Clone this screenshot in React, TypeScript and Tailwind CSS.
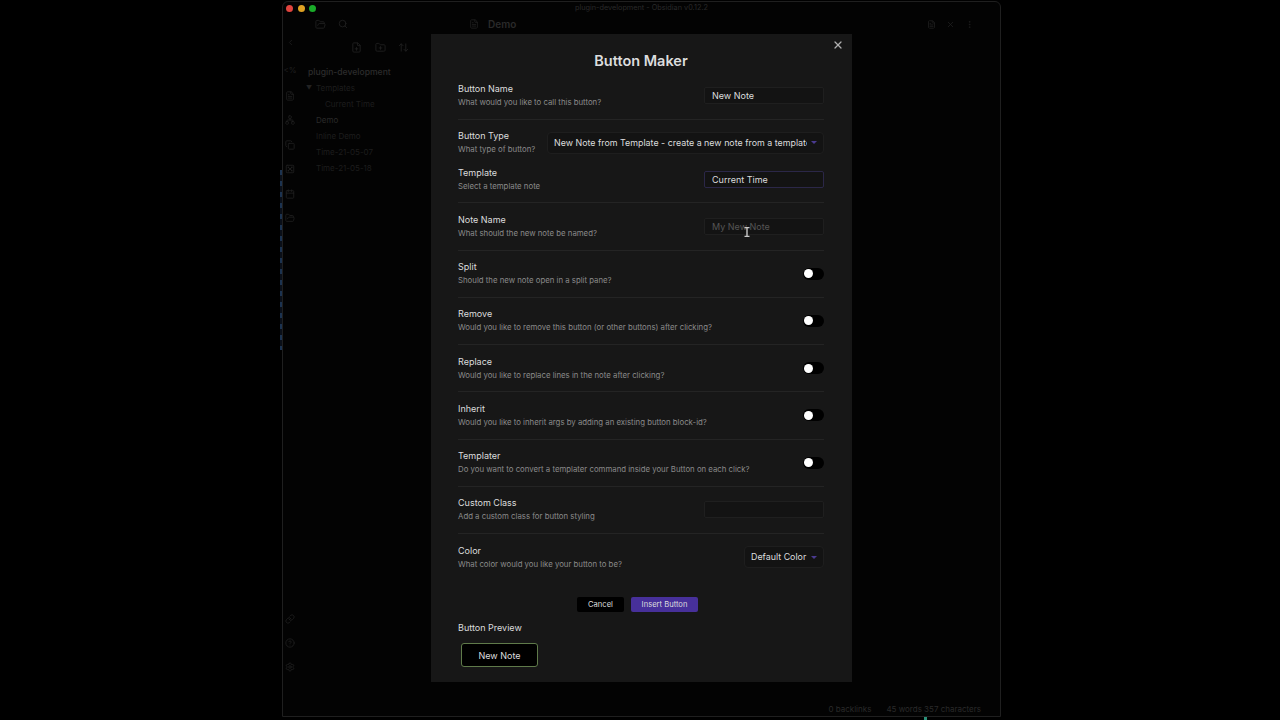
import {
  ArrowUpDown,
  Calendar,
  ChevronLeft,
  CircleHelp,
  Copy,
  FilePlus,
  FileText,
  FolderOpen,
  FolderPlus,
  Link,
  MoreVertical,
  Network,
  Search,
  Settings,
  Vault,
  X,
} from "lucide-react";

const files = [
  { name: "Templates", indent: "pl-[19px]", arrow: true },
  { name: "Current Time", indent: "pl-[28px]" },
  { name: "Demo", indent: "pl-[19px]", bright: true },
  { name: "Inline Demo", indent: "pl-[19px]" },
  { name: "Time-21-05-07", indent: "pl-[19px]" },
  { name: "Time-21-05-18", indent: "pl-[19px]" },
];

function Background() {
  const dim = "text-[#202020]";
  return (
    <div className="ml-[282px] mt-[1px] flex h-[716px] w-[719px] flex-col rounded-t-[6px] border border-[#1f1f1f] bg-[#030303]">
      <div className="relative flex h-[13px] shrink-0 items-center">
        <div className="ml-[3px] flex gap-[4.5px]">
          <span className="h-[7px] w-[7px] rounded-full bg-[#e0443e]" />
          <span className="h-[7px] w-[7px] rounded-full bg-[#dea123]" />
          <span className="h-[7px] w-[7px] rounded-full bg-[#1aab29]" />
        </div>
        <span className="absolute left-[292px] top-0 text-[7.3px] leading-[11px] text-[#2a2a2a]">
          plugin-development - Obsidian v0.12.2
        </span>
      </div>
      <div className="flex h-[18px] shrink-0 items-center">
        <FolderOpen size={11} className={`ml-[32px] ${dim}`} />
        <Search size={10} className={`ml-[12px] ${dim}`} />
        <FileText size={10} className={`ml-[121px] ${dim}`} />
        <span className="ml-[9px] text-[10px] font-semibold text-[#2a2a2a]">Demo</span>
        <div className="ml-auto mr-[26px] flex items-center gap-[10px]">
          <FileText size={9} className={dim} />
          <X size={9} className={dim} />
          <MoreVertical size={9} className={dim} />
        </div>
      </div>
      <div className="flex min-h-0 flex-1">
        <div className={`flex w-[14px] shrink-0 flex-col items-center gap-[14.5px] pt-[5px] ${dim}`}>
          <ChevronLeft size={9} />
          <span className="mt-[2.5px] text-[8px]">{"<%"}</span>
          <FileText size={10} />
          <Network size={10} />
          <Copy size={10} />
          <Vault size={10} />
          <Calendar size={10} />
          <FolderOpen size={10} />
          <div className="mt-auto flex flex-col items-center gap-[14px] pb-[32px]">
            <Link size={10} />
            <CircleHelp size={10} />
            <Settings size={10} />
          </div>
        </div>
        <div className="w-[134px] shrink-0">
          <div className={`flex gap-[12.5px] pl-[54px] pt-[9px] ${dim}`}>
            <FilePlus size={11} />
            <FolderPlus size={11} />
            <ArrowUpDown size={11} />
          </div>
          <p className="mt-[12px] pl-[11px] text-[8.6px] font-medium leading-[14px] text-[#2c2c2c]">
            plugin-development
          </p>
          <div className="mt-[1px]">
            {files.map((file) => (
              <div
                key={file.name}
                className={`relative h-[16px] ${file.indent} text-[8px] leading-[16px] ${file.bright ? "text-[#2a2a2a]" : "text-[#1d1d1d]"}`}
              >
                {file.arrow ? (
                  <span className="absolute left-[9px] top-0 text-[6px] text-[#222222]">▼</span>
                ) : null}
                {file.name}
              </div>
            ))}
          </div>
        </div>
        <div className="flex-1" />
      </div>
      <div className="flex h-[12px] shrink-0 items-start justify-end gap-[15px] pr-[19px] text-[8px] leading-[10px] text-[#2a2a2a]">
        <span>0 backlinks</span>
        <span>45 words 357 characters</span>
      </div>
    </div>
  );
}

function Toggle() {
  return (
    <div className="flex h-[12px] w-[21px] items-center rounded-full bg-black pl-[1px]">
      <span className="h-[9px] w-[9px] rounded-full bg-white" />
    </div>
  );
}

function TextBox({
  value,
  placeholder,
  focused,
}: {
  value?: string;
  placeholder?: string;
  focused?: boolean;
}) {
  return (
    <div
      className={`flex h-[17px] w-[120px] items-center rounded-[2px] border bg-[#131313] px-[7px] text-[9px] ${
        focused ? "border-[#2b2748]" : "border-[#1f1f1f]"
      } ${value ? "text-[#dcddde]" : "text-[#555555]"}`}
    >
      {value ?? placeholder}
    </div>
  );
}

function Dropdown({ label, className }: { label: string; className: string }) {
  return (
    <div
      className={`flex h-[22px] items-center justify-between rounded-[4px] border border-[#1e1e1e] bg-[#131313] px-[6px] text-[8.9px] text-[#dcddde] ${className}`}
    >
      <span className="min-w-0 flex-1 overflow-hidden whitespace-nowrap">{label}</span>
      <span className="ml-[4px] h-0 w-0 shrink-0 border-x-[3px] border-t-[3px] border-x-transparent border-t-[#4a3a8f]" />
    </div>
  );
}

function Setting({
  name,
  desc,
  border = true,
  className = "",
  children,
}: {
  name: string;
  desc: string;
  border?: boolean;
  className?: string;
  children: React.ReactNode;
}) {
  return (
    <div
      className={`flex h-[47.25px] items-center justify-between ${border ? "border-t border-[#242424]" : ""} ${className}`}
    >
      <div className="shrink-0">
        <p className="text-[9px] leading-[14px] text-[#dcddde]">{name}</p>
        <p className="text-[7.8px] leading-[13px] text-[#8a8a8a]">{desc}</p>
      </div>
      {children}
    </div>
  );
}

function Modal() {
  return (
    <div className="absolute left-[431px] top-[33.5px] w-[421px] bg-[#171717] pb-[15px] pl-[27px] pr-[28px] pt-[17.5px]">
      <X size={12} strokeWidth={2.5} className="absolute right-[8px] top-[5px] text-[#b0b0b0]" />
      <h1 className="mb-[0.5px] text-center text-[14.5px] font-semibold leading-[20px] text-[#dcddde]">
        Button Maker
      </h1>
      <Setting
        name="Button Name"
        desc="What would you like to call this button?"
        border={false}
        className="pt-[1px]"
      >
        <TextBox value="New Note" />
      </Setting>
      <Setting name="Button Type" desc="What type of button?" className="-mb-[10px]">
        <Dropdown
          label="New Note from Template - create a new note from a template"
          className="w-[277px]"
        />
      </Setting>
      <Setting name="Template" desc="Select a template note" border={false} className="-mb-[1px]">
        <TextBox value="Current Time" focused />
      </Setting>
      <Setting name="Note Name" desc="What should the new note be named?">
        <div className="relative">
          <TextBox placeholder="My New Note" />
          {/* text cursor from the recording */}
          <svg
            viewBox="0 0 6 10"
            className="absolute left-[40px] top-[9px] h-[10px] w-[6px] text-[#c8c8c8]"
          >
            <path d="M0.5 0.5h5M0.5 9.5h5M3 0.5v9" stroke="currentColor" fill="none" strokeWidth="1.4" />
          </svg>
        </div>
      </Setting>
      <Setting name="Split" desc="Should the new note open in a split pane?">
        <Toggle />
      </Setting>
      <Setting name="Remove" desc="Would you like to remove this button (or other buttons) after clicking?">
        <Toggle />
      </Setting>
      <Setting name="Replace" desc="Would you like to replace lines in the note after clicking?">
        <Toggle />
      </Setting>
      <Setting name="Inherit" desc="Would you like to inherit args by adding an existing button block-id?">
        <Toggle />
      </Setting>
      <Setting name="Templater" desc="Do you want to convert a templater command inside your Button on each click?">
        <Toggle />
      </Setting>
      <Setting name="Custom Class" desc="Add a custom class for button styling">
        <TextBox />
      </Setting>
      <Setting name="Color" desc="What color would you like your button to be?">
        <Dropdown label="Default Color" className="w-[80px]" />
      </Setting>
      <div className="mt-[17px] flex justify-center gap-[7px] pr-[7px] text-[7.6px] leading-[15px] text-[#dcddde]">
        <button className="h-[15px] w-[47px] rounded-[2px] bg-black">Cancel</button>
        <button className="h-[15px] w-[67px] rounded-[2px] bg-[#47309a]">Insert Button</button>
      </div>
      <p className="mt-[9px] text-[9px] leading-[14px] text-[#dcddde]">Button Preview</p>
      <button className="ml-[3px] mt-[8px] h-[24px] w-[77px] rounded-[3px] border border-[#5f7a4a] bg-black text-[9px] text-[#dcddde]">
        New Note
      </button>
    </div>
  );
}

export default function App() {
  return (
    <div className="relative h-[720px] w-[1280px] overflow-hidden bg-black font-['Inter',sans-serif]">
      <Background />
      {/* desktop showing past the window's left edge */}
      <div className="absolute left-[280px] top-[170px] h-[180px] w-[2px] bg-[repeating-linear-gradient(to_bottom,#1c3350_0px,#1c3350_5px,#0a0f18_5px,#0a0f18_11px)]" />
      <Modal />
      {/* dock sliver below the window */}
      <div className="absolute left-[924px] top-[717px] h-[3px] w-[3px] bg-[#2a8f78]" />
    </div>
  );
}
